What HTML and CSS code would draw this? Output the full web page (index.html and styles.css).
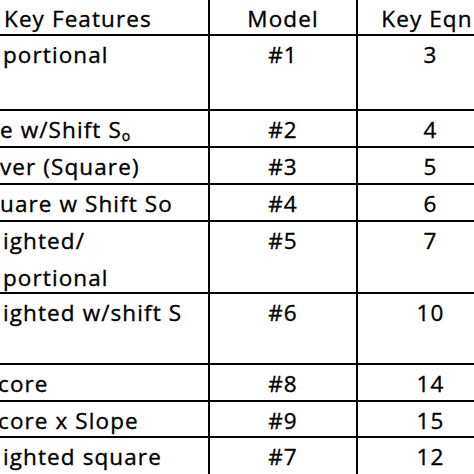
FILE: index.html
```html
<!DOCTYPE html>
<html lang="en">
<head>
<meta charset="utf-8">
<title>Models</title>
<link rel="stylesheet" href="styles.css">
</head>
<body>
<div class="sheet">
  <div class="cell head feat">Key Features</div>
  <div class="cell head mid">Model</div>
  <div class="cell head mid">Key Eqn.</div>

  <div class="cell feat">portional</div>
  <div class="cell mid">#1</div>
  <div class="cell mid">3</div>

  <div class="cell feat flush">e w/Shift S<sub class="sub">o</sub></div>
  <div class="cell mid">#2</div>
  <div class="cell mid">4</div>

  <div class="cell feat flush">ver (Square)</div>
  <div class="cell mid">#3</div>
  <div class="cell mid">5</div>

  <div class="cell feat flush">uare w Shift So</div>
  <div class="cell mid">#4</div>
  <div class="cell mid">6</div>

  <div class="cell feat">ighted/<br>portional</div>
  <div class="cell mid">#5</div>
  <div class="cell mid">7</div>

  <div class="cell feat">ighted w/shift S</div>
  <div class="cell mid">#6</div>
  <div class="cell mid">10</div>

  <div class="cell feat cut">core</div>
  <div class="cell mid">#8</div>
  <div class="cell mid">14</div>

  <div class="cell feat cut">core x Slope</div>
  <div class="cell mid">#9</div>
  <div class="cell mid">15</div>

  <div class="cell feat">ighted square</div>
  <div class="cell mid">#7</div>
  <div class="cell mid">12</div>
</div>
</body>
</html>
```
FILE: styles.css
```css
html, body {
  margin: 0;
  padding: 0;
  overflow: hidden;
  background: #fff;
}

.sheet {
  display: grid;
  grid-template-columns: 208px 146px 145px;
  grid-template-rows: 34px 73px 35px 35px 35px 70px 69px 35px 34px 40px;
  gap: 2px;
  width: 503px;
  background: #000;
  font-family: "Open Sans", "Noto Sans", sans-serif;
  font-size: 22.5px;
  letter-spacing: 1.1px;
  color: #000;
  -webkit-text-stroke: 0.35px #000;
}

.cell {
  background: #fff;
  line-height: 37px;
  white-space: nowrap;
  overflow: hidden;
}

.head {
  line-height: 34px;
  padding-top: 2px;
}

.feat {
  padding-left: 3px;
}

.feat.head {
  padding-left: 4px;
}

.feat.flush {
  padding-left: 0;
}

.feat.cut {
  padding-left: 0;
  text-indent: -2px;
}

.mid {
  text-align: center;
}

.sub {
  font-size: 14px;
  letter-spacing: 0;
  vertical-align: -3px;
  line-height: 0;
}
```
